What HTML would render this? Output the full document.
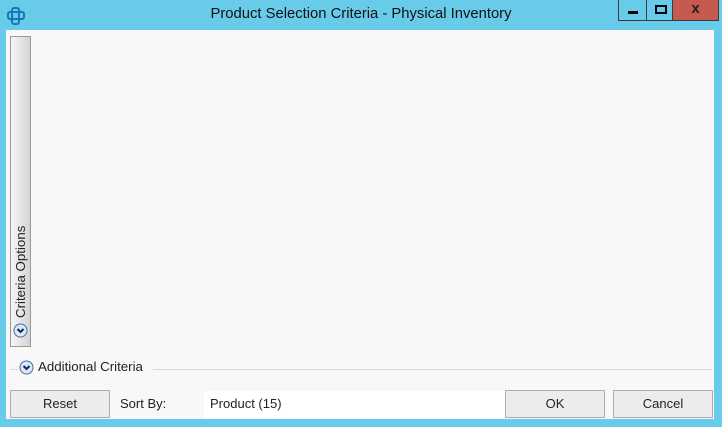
<!DOCTYPE html><html><head><style>
body{margin:0;width:722px;height:427px;background:#69cbea;position:relative;overflow:hidden;font-family:"Liberation Sans",sans-serif;font-size:12px;color:#222}
.a{position:absolute}
.btn{position:absolute;background:#ececec;border:1px solid #adadad;box-sizing:border-box;text-align:center;line-height:26px;font-size:13px}
.wb{position:absolute;top:0;height:21px;border:1px solid #3c3c3c;border-top:none;box-sizing:border-box}
</style></head><body>
<svg class="a" style="left:7px;top:7px" width="18" height="18" viewBox="0 0 18 18"><g fill="none" stroke="#1777b6" stroke-width="2"><rect x="5" y="1" width="7" height="16" rx="2"/><rect x="1" y="5" width="16" height="7" rx="2"/></g></svg>
<div class="a" style="left:0;width:722px;top:6px;text-align:center;font-size:14.8px;color:#111">Product Selection Criteria - Physical Inventory</div>
<div class="wb" style="left:618px;width:29px;background:#69cbea"><div class="a" style="left:9px;top:11px;width:10px;height:3px;background:#000"></div></div>
<div class="wb" style="left:646px;width:27px;background:#69cbea"><div class="a" style="left:8px;top:5px;width:8px;height:5px;border:2px solid #000"></div></div>
<div class="wb" style="left:672px;width:47px;background:#c75a50;text-align:center;font-weight:bold;font-size:15px;line-height:18px">x</div>
<div class="a" style="left:6px;top:30px;width:708px;height:389px;background:#f8f8f8"></div>
<div class="a" style="left:10px;top:36px;width:21px;height:311px;box-sizing:border-box;border:1px solid #9a9a9a;background:linear-gradient(90deg,#f6f6f6,#d4d4d4)"></div>
<div class="a" style="left:21px;top:318px;transform:rotate(-90deg);transform-origin:0 0;white-space:nowrap;font-size:13.3px;line-height:0">Criteria Options</div>
<svg class="a" style="left:13px;top:323px" width="15" height="15"><circle cx="7.5" cy="7.5" r="6.5" fill="#dce8f6" stroke="#4a6ea8"/><path d="M4.5 6l3 3 3-3" stroke="#0c2a5c" stroke-width="2" fill="none"/></svg>
<div class="a" style="left:10px;top:369px;width:8px;height:1px;background:#d5dbe2"></div>
<div class="a" style="left:153px;top:369px;width:559px;height:1px;background:#d5dbe2"></div>
<svg class="a" style="left:19px;top:360px" width="15" height="15"><circle cx="7.5" cy="7.5" r="6.5" fill="#dce8f6" stroke="#4a6ea8"/><path d="M4.5 6l3 3 3-3" stroke="#0c2a5c" stroke-width="2" fill="none"/></svg>
<div class="a" style="left:38px;top:359px;font-size:13.3px">Additional Criteria</div>
<div class="btn" style="left:10px;top:390px;width:100px;height:28px">Reset</div>
<div class="a" style="left:120px;top:396px;font-size:13px">Sort By:</div>
<div class="a" style="left:204px;top:391px;width:302px;height:27px;background:#fff;box-sizing:border-box;padding:5px 6px;font-size:13px">Product (15)</div>
<div class="btn" style="left:505px;top:390px;width:100px;height:28px">OK</div>
<div class="btn" style="left:613px;top:390px;width:100px;height:28px">Cancel</div>
</body></html>
